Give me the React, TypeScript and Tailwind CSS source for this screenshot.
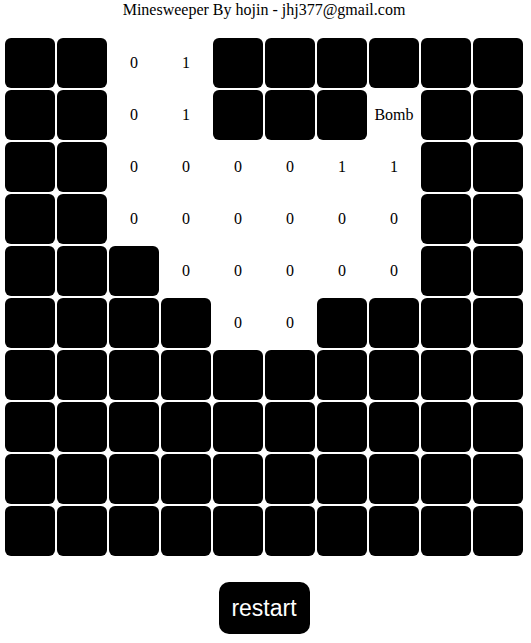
import React from "react";

const B = "B";
const board: (string | number)[][] = [
  [B, B, 0, 1, B, B, B, B, B, B],
  [B, B, 0, 1, B, B, B, "Bomb", B, B],
  [B, B, 0, 0, 0, 0, 1, 1, B, B],
  [B, B, 0, 0, 0, 0, 0, 0, B, B],
  [B, B, B, 0, 0, 0, 0, 0, B, B],
  [B, B, B, B, 0, 0, B, B, B, B],
  [B, B, B, B, B, B, B, B, B, B],
  [B, B, B, B, B, B, B, B, B, B],
  [B, B, B, B, B, B, B, B, B, B],
  [B, B, B, B, B, B, B, B, B, B],
];

export default function App() {
  return (
    <div className="w-[531px] h-[643px] bg-white text-black" style={{ fontFamily: '"Liberation Serif", "Times New Roman", serif' }}>
      <div className="w-[528px] text-center text-[16px] leading-[20px] pt-0">
        Minesweeper By hojin - jhj377@gmail.com
      </div>
      <div className="ml-[5px] mt-[18px] grid grid-cols-[repeat(10,50px)] auto-rows-[50px] gap-[2px] w-[518px]">
        {board.flat().map((c, i) =>
          c === B ? (
            <div key={i} className="bg-black rounded-[6px]" />
          ) : (
            <div key={i} className="flex items-center justify-center text-[16px]">
              {c}
            </div>
          )
        )}
      </div>
      <div className="w-[518px] ml-[5px] flex justify-center mt-[26px]">
        <button
          className="bg-black text-white rounded-[10px] h-[52px] w-[91px] text-[23px] flex items-center justify-center"
          style={{ fontFamily: '"Liberation Sans", Arial, sans-serif' }}
        >
          restart
        </button>
      </div>
    </div>
  );
}
